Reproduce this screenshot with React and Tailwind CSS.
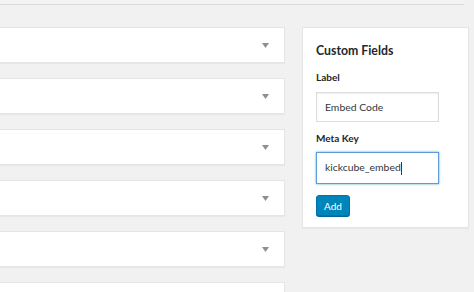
import React from 'react';

const rows = [0, 1, 2, 3, 4, 5];

function Row() {
  return (
    <div className="h-[36px] bg-white border border-[#e5e5e5] border-l-0 shadow-[0_1px_1px_rgba(0,0,0,0.04)] flex items-center justify-end pr-[15px]">
      <svg width="7" height="5" viewBox="0 0 7 5" className="block">
        <path d="M0 0 L7 0 L3.5 5 Z" fill="#8c8f94" />
      </svg>
    </div>
  );
}

export default function App() {
  return (
    <div
      className="w-[474px] h-[292px] overflow-hidden bg-[#f1f1f1] text-[#23282d]"
      style={{ fontFamily: 'Lato, "Noto Sans", sans-serif' }}
    >
      <div className="h-[5px] border-b border-[#dcdcdc] bg-[#f3f3f3] mr-[10px]" />
      <div className="flex gap-[17px] pt-[22px]">
        {/* Left: collapsed boxes */}
        <div className="w-[285px] flex flex-col gap-[15px] shrink-0">
          {rows.map(r => <Row key={r} />)}
        </div>

        {/* Right: custom fields */}
        <div className="w-[167px] h-[201px] bg-white border border-[#e5e5e5] shadow-[0_1px_1px_rgba(0,0,0,0.04)] px-[13px] pt-[14px]">
          <h2 className="text-[12.3px] font-bold leading-[17px] text-[#23282d]">Custom Fields</h2>
          <div className="mt-[11px] text-[10px] font-bold leading-[14px]">Label</div>
          <input
            className="mt-[8px] block w-[123px] h-[30px] border border-[#ddd] bg-white px-[8px] text-[10.4px] text-[#32373c] shadow-[inset_0_1px_2px_rgba(0,0,0,0.07)] outline-none"
            style={{ fontFamily: 'inherit' }}
            defaultValue="Embed Code"
            readOnly
          />
          <div className="mt-[9px] text-[10px] font-bold leading-[14px]">Meta Key</div>
          <div className="mt-[7px] w-[123px] h-[32px] border border-[#5b9dd9] bg-white px-[8px] flex items-center text-[10.4px] text-[#32373c] shadow-[0_0_2px_rgba(30,140,190,0.8)]">
            <span>kickcube_embed</span>
            <span className="w-px h-[13px] bg-[#32373c]" />
          </div>
          <button className="mt-[11px] block h-[21px] px-[7px] rounded-[3px] bg-[#0085ba] border border-[#0073aa] text-white text-[10px] leading-none shadow-[0_1px_0_#006799]">
            Add
          </button>
        </div>
      </div>
    </div>
  );
}
